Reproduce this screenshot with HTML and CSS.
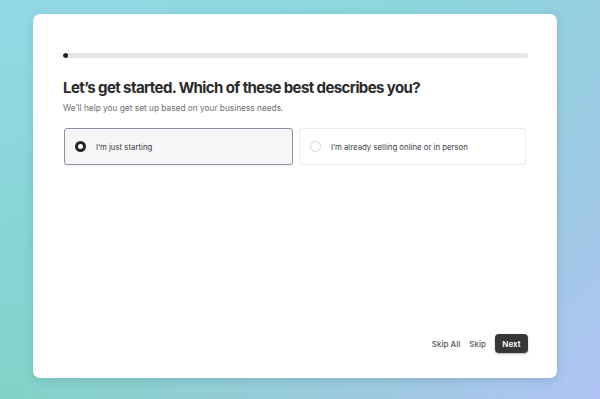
FILE: index.html
```html
<!DOCTYPE html>
<html>
<head>
<meta charset="utf-8">
<link rel="stylesheet" href="styles.css">
</head>
<body>
<div class="stage">
  <div class="card">
    <div class="progress"><div class="progress-fill"></div></div>
    <h1 class="title">Let’s get started. Which of these best describes you?</h1>
    <p class="subtitle">We’ll help you get set up based on your business needs.</p>
    <div class="options">
      <div class="option selected">
        <span class="radio"></span>
        <span class="label">I’m just starting</span>
      </div>
      <div class="option">
        <span class="radio"></span>
        <span class="label">I’m already selling online or in person</span>
      </div>
    </div>
    <div class="footer">
      <span class="link">Skip All</span>
      <span class="link">Skip</span>
      <span class="btn">Next</span>
    </div>
  </div>
</div>
</body>
</html>
```
FILE: styles.css
```css
html, body {
  margin: 0;
  padding: 0;
  width: 600px;
  height: 399px;
  overflow: hidden;
}
body {
  font-family: Inter, "Noto Sans", sans-serif;
  background:
    linear-gradient(135deg, rgba(142,214,228,0) 40%, rgba(176,196,246,1) 100%),
    linear-gradient(160deg, #93d9e6 0%, #86d5d4 45%, #7ecfb5 100%);
}
.stage {
  padding: 14px 43px 21px 33px;
  height: 364px;
}
.card {
  box-sizing: border-box;
  width: 524px;
  height: 364px;
  background: #ffffff;
  border-radius: 7px;
  box-shadow: 0 2px 10px rgba(40, 80, 100, 0.18);
  padding: 39px 29px 25px 30px;
  display: flex;
  flex-direction: column;
}
.progress {
  height: 5px;
  background: #e6e6e6;
  border-radius: 3px;
  overflow: hidden;
}
.progress-fill {
  width: 5px;
  height: 5px;
  background: #222;
  border-radius: 3px;
}
.title {
  margin: 21px 0 0 0;
  font-size: 15px;
  font-weight: 700;
  color: #2a2a2a;
  letter-spacing: -0.6px;
  line-height: 18px;
}
.subtitle {
  margin: 5px 0 0 0;
  font-size: 8.3px;
  color: #6d6d6d;
  line-height: 12px;
}
.options {
  margin-top: 14px;
  display: grid;
  grid-template-columns: 229px 227px;
  gap: 6px;
  padding-left: 1px;
}
.option {
  box-sizing: border-box;
  height: 37px;
  border: 1px solid #ebebeb;
  border-radius: 3px;
  display: flex;
  align-items: center;
  padding-left: 10px;
  background: #fff;
}
.option.selected {
  background: #f6f6f7;
  border: 1px solid #8e8ea4;
  box-shadow: 0 1px 1px rgba(0,0,0,0.06);
}
.radio {
  box-sizing: border-box;
  width: 11px;
  height: 11px;
  border-radius: 50%;
  border: 1px solid #d6d6d6;
  background: #fff;
}
.option.selected .radio {
  border: 3px solid #262626;
}
.label {
  margin-left: 10px;
  font-size: 7.8px;
  color: #3e3e3e;
}
.footer {
  margin-top: auto;
  display: flex;
  justify-content: flex-end;
  align-items: center;
  gap: 9px;
}
.link {
  font-size: 8px;
  font-weight: 500;
  color: #555;
}
.btn {
  background: #373737;
  color: #fff;
  font-size: 8px;
  font-weight: 600;
  border-radius: 4px;
  padding: 0 7.5px;
  height: 19px;
  display: flex;
  align-items: center;
  box-shadow: 0 1px 2px rgba(0,0,0,0.3);
}
```
